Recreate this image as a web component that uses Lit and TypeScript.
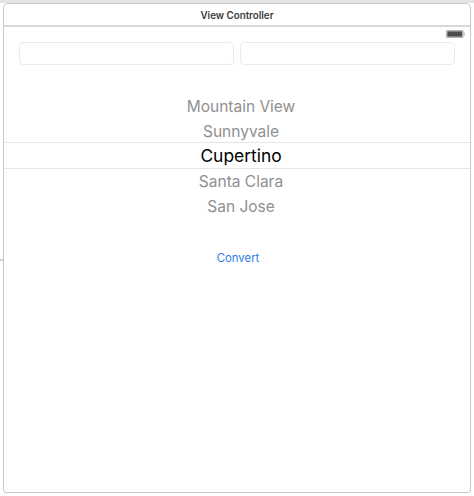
import { LitElement, html, css } from "lit";
import { customElement } from "lit/decorators.js";

const CITIES = ["Mountain View", "Sunnyvale", "Cupertino", "Santa Clara", "San Jose"];

@customElement("app-root")
export class AppRoot extends LitElement {
  static styles = css`
    :host {
      display: block;
      width: 474px;
      height: 496px;
      box-sizing: border-box;
      padding: 3px 3px 3px 3px;
      background: linear-gradient(#e4e4e4 0, #e4e4e4 3px, #fff 3px);
      font-family: Inter, "Liberation Sans", sans-serif;
      position: relative;
      overflow: hidden;
    }
    .tick {
      position: absolute;
      left: 0;
      top: 259px;
      width: 3px;
      height: 2px;
      background: #d0d0d0;
    }
    .frame {
      box-sizing: border-box;
      height: 490px;
      border: 1px solid #c8c8c8;
      border-radius: 5px 5px 3px 3px;
      background: #fff;
      display: flex;
      flex-direction: column;
    }
    .title {
      height: 20px;
      padding-top: 1px;
      display: flex;
      align-items: center;
      justify-content: center;
      font-size: 9.8px;
      font-weight: 600;
      color: #3c3c3c;
      border-bottom: 2px solid #d8d8d8;
      flex: none;
    }
    .status {
      height: 15px;
      display: flex;
      justify-content: flex-end;
      align-items: flex-start;
      padding: 3px 5px 0 0;
      box-sizing: border-box;
      flex: none;
    }
    .status svg {
      display: block;
    }
    .fields {
      display: flex;
      gap: 6px;
      padding-left: 15px;
      flex: none;
    }
    .field {
      width: 215px;
      height: 23px;
      box-sizing: border-box;
      border: 1px solid #ebebeb;
      border-radius: 4px;
      background: #fff;
    }
    .picker {
      margin-top: 29px;
      display: flex;
      flex-direction: column;
      flex: none;
    }
    .row {
      height: 25px;
      display: flex;
      align-items: center;
      justify-content: center;
      padding-left: 8px;
      font-size: 15.5px;
      color: #909090;
    }
    .row.sel {
      height: 27px;
      margin-top: -2px;
      box-sizing: border-box;
      color: #000;
      font-size: 17.4px;
      border-top: 1px solid #e6e6e6;
      border-bottom: 1px solid #e6e6e6;
    }
    .convert {
      margin-top: 31px;
      text-align: center;
      font-size: 11.4px;
      color: #2f7de1;
      line-height: 16px;
      padding-left: 2px;
    }
  `;

  render() {
    return html`
      <div class="tick"></div>
      <div class="frame">
        <div class="title">View Controller</div>
        <div class="status">
          <svg width="19" height="8" viewBox="0 0 19 8">
            <rect x="0" y="0" width="17.5" height="8" rx="1.5" fill="#b4b4b4" />
            <rect x="1.5" y="1.5" width="14.5" height="5" fill="#4c4c4c" />
            <rect x="17.5" y="2.5" width="1.2" height="3" fill="#b4b4b4" />
          </svg>
        </div>
        <div class="fields">
          <div class="field"></div>
          <div class="field"></div>
        </div>
        <div class="picker">
          ${CITIES.map(
            (c, i) => html`<div class="row ${i === 2 ? "sel" : ""}">${c}</div>`
          )}
        </div>
        <div class="convert">Convert</div>
      </div>
    `;
  }
}
